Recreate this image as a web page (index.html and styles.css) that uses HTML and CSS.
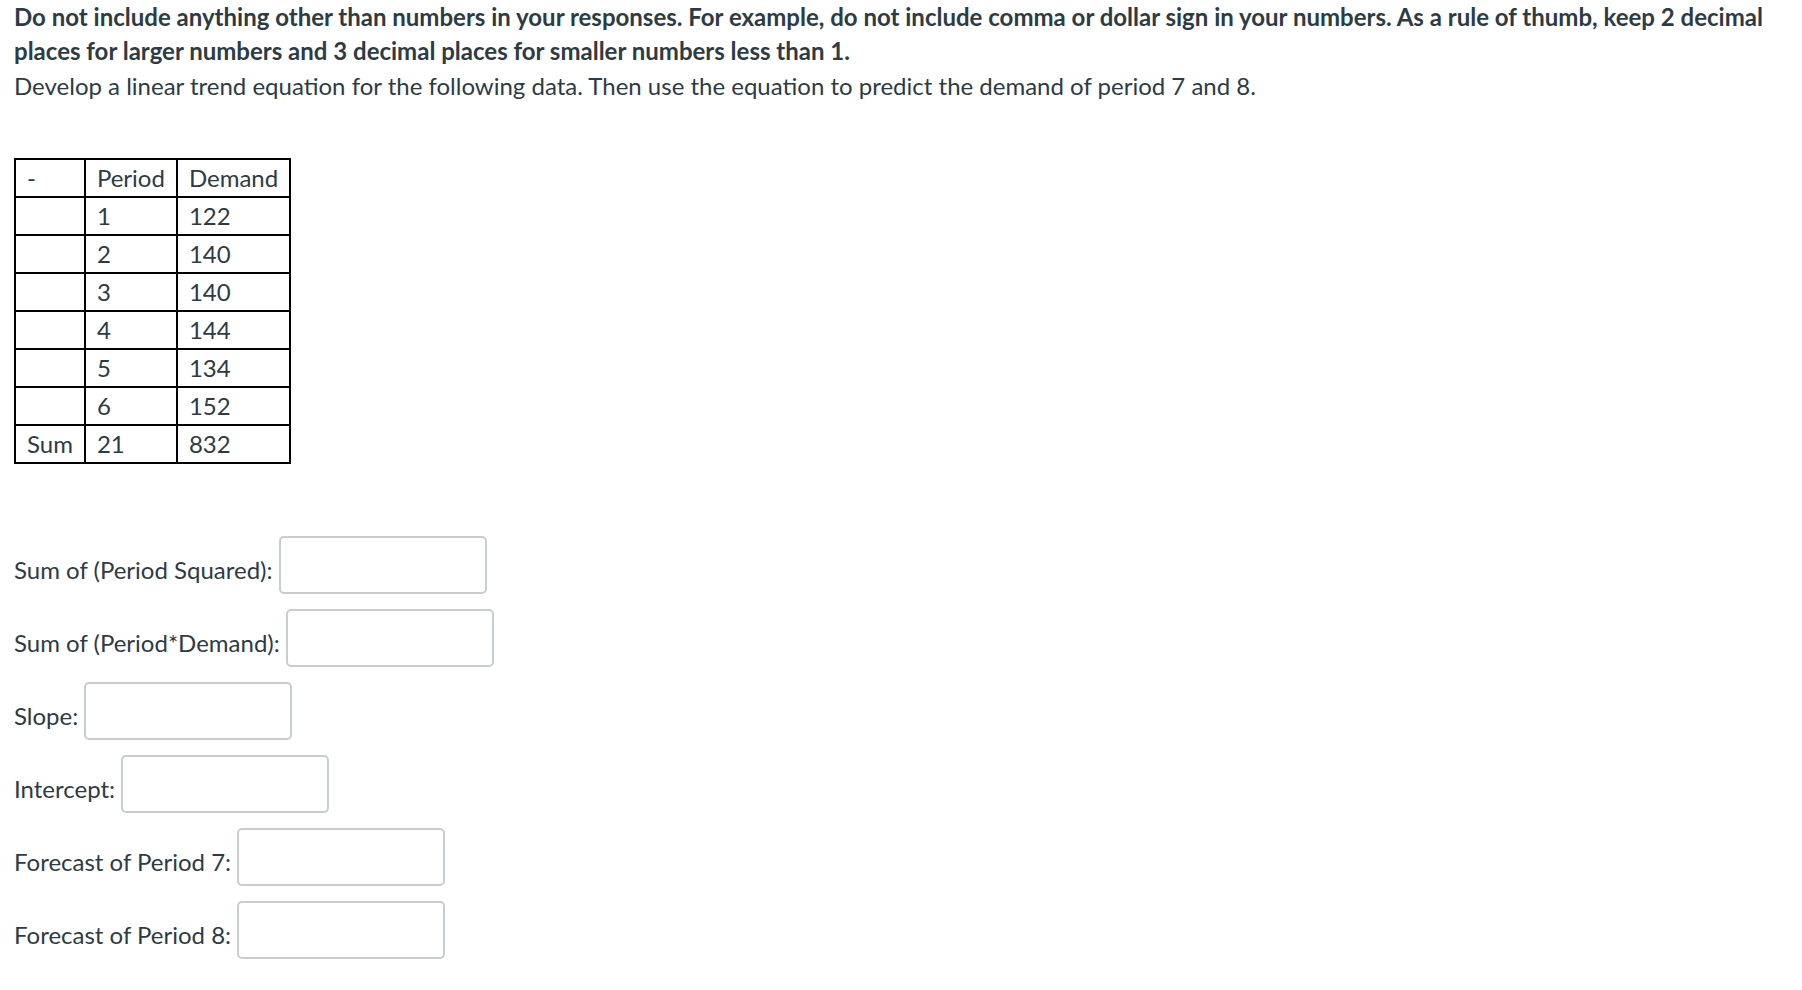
FILE: index.html
```html
<!DOCTYPE html>
<html>
<head>
<meta charset="utf-8">
<link rel="stylesheet" href="styles.css">
</head>
<body>
<div class="question">
  <p class="lead"><strong>Do not include anything other than numbers in your responses. For example, do not include comma or dollar sign in your numbers. As a rule of thumb, keep 2 decimal places for larger numbers and 3 decimal places for smaller numbers less than 1.</strong></p>
  <p class="intro">Develop a linear trend equation for the following data. Then use the equation to predict the demand of period 7 and 8.</p>
  <table class="data">
    <tr><td>-</td><td>Period</td><td>Demand</td></tr>
    <tr><td></td><td>1</td><td>122</td></tr>
    <tr><td></td><td>2</td><td>140</td></tr>
    <tr><td></td><td>3</td><td>140</td></tr>
    <tr><td></td><td>4</td><td>144</td></tr>
    <tr><td></td><td>5</td><td>134</td></tr>
    <tr><td></td><td>6</td><td>152</td></tr>
    <tr><td>Sum</td><td>21</td><td>832</td></tr>
  </table>
  <div class="answers">
    <div class="row"><span class="label">Sum of (Period Squared):</span><input class="box" type="text"></div>
    <div class="row"><span class="label">Sum of (Period*Demand):</span><input class="box" type="text"></div>
    <div class="row"><span class="label">Slope:</span><input class="box" type="text"></div>
    <div class="row"><span class="label">Intercept:</span><input class="box" type="text"></div>
    <div class="row"><span class="label">Forecast of Period 7:</span><input class="box" type="text"></div>
    <div class="row"><span class="label">Forecast of Period 8:</span><input class="box" type="text"></div>
  </div>
</div>
</body>
</html>
```
FILE: styles.css
```css
html, body {
  margin: 0;
  padding: 0;
  background: #ffffff;
}
body {
  font-family: Lato, "Open Sans", sans-serif;
  font-size: 24px;
  line-height: 36px;
  color: #2d3b45;
}
.question {
  padding: 0 14px;
}
.lead {
  margin: 0;
  line-height: 33.6px;
}
.lead strong {
  font-weight: 700;
}
.intro {
  margin: 2px 0 0;
  line-height: 33.6px;
}
.data {
  border-collapse: collapse;
  margin-top: 55px;
  border: 2px solid #000;
}
.data td {
  border: 2px solid #000;
  padding: 0 11px;
  height: 36px;
  text-align: left;
  vertical-align: middle;
}
.answers {
  margin-top: 72px;
}
.row {
  display: flex;
  align-items: center;
  height: 58px;
  margin-bottom: 15px;
}
.label {
  margin-right: 6px;
  position: relative;
  top: 5px;
}
.box {
  box-sizing: border-box;
  width: 208px;
  height: 58px;
  border: 2px solid #c7cdd1;
  border-radius: 5px;
  background: #fff;
  margin: 0;
  padding: 0 8px;
  font: inherit;
}
```
